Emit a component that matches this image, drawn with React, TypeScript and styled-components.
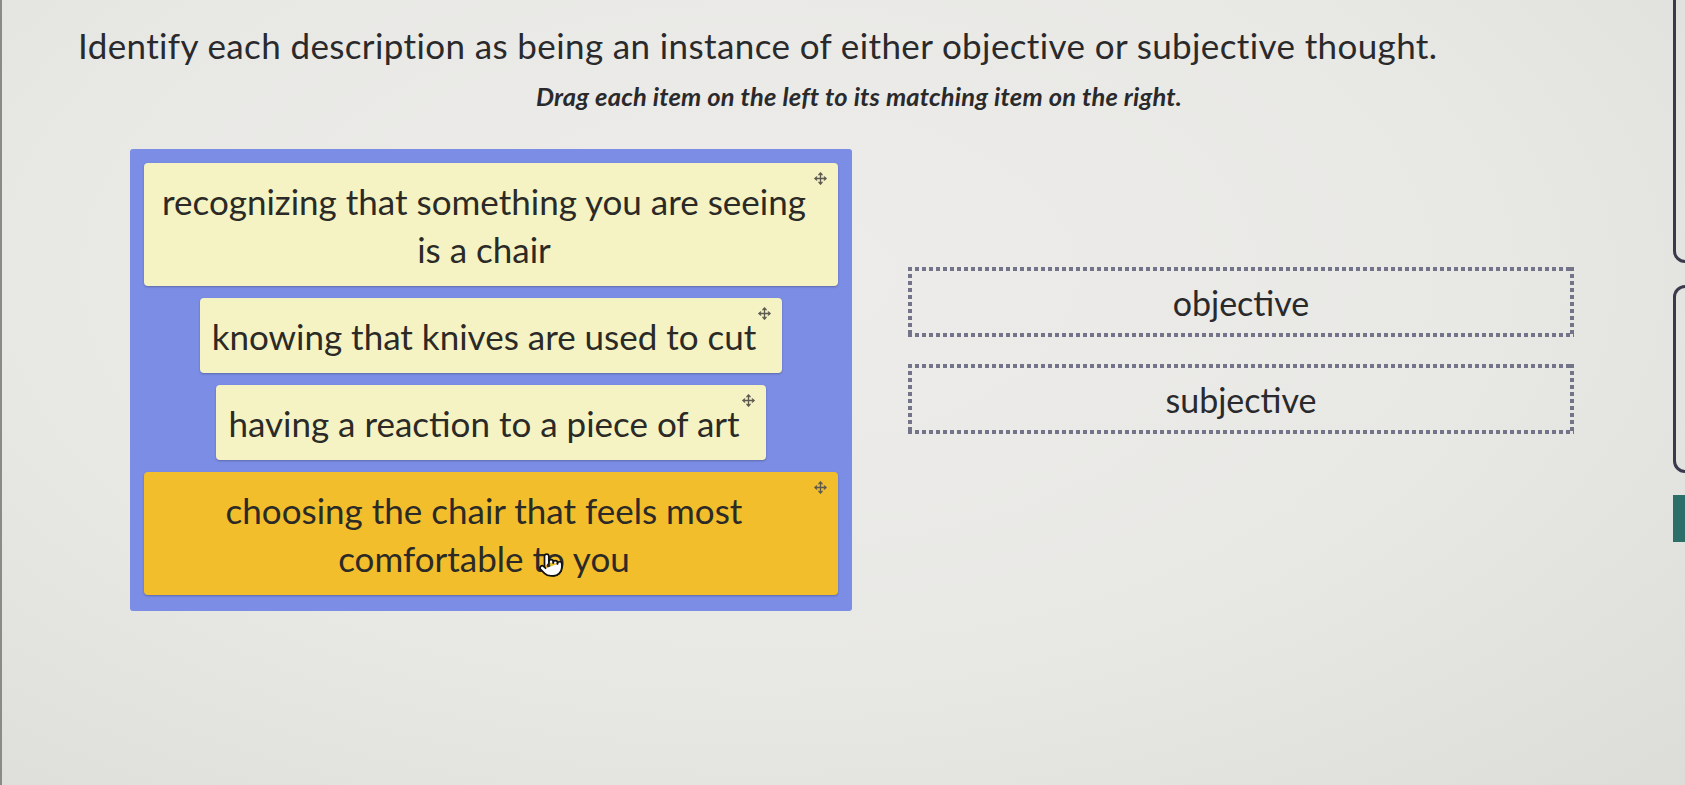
import React from "react";
import styled, { createGlobalStyle } from "styled-components";
import { Move, Pointer } from "lucide-react";

const Global = createGlobalStyle`
  html, body { margin: 0; padding: 0; }
  body {
    width: 1685px;
    height: 785px;
    overflow: hidden;
    font-family: Lato, "Open Sans", sans-serif;
    color: #2b2b2e;
    background: radial-gradient(ellipse at 45% 35%, #edecea 0%, #e8e8e5 55%, #dcdcd8 100%);
  }
`;

const Page = styled.div`
  display: flex;
  width: 1685px;
  height: 785px;
  border-left: 2px solid #8a8a88;
  box-sizing: border-box;
`;

const Main = styled.main`
  flex: 1;
  padding: 23px 0 0 76px;
`;

const Title = styled.h1`
  margin: 0;
  font-size: 35px;
  font-weight: 400;
  letter-spacing: 0.38px;
  line-height: 44px;
  color: #2a2a2c;
`;

const Subtitle = styled.p`
  margin: 14px 0 0 0;
  padding-left: 458px;
  font-size: 25.5px;
  font-weight: 700;
  font-style: italic;
  letter-spacing: 0.2px;
  line-height: 30px;
  color: #2a2a2c;
`;

const Board = styled.div`
  display: flex;
  align-items: flex-start;
  gap: 56px;
  margin: 38px 0 0 52px;
`;

const Panel = styled.div`
  width: 722px;
  box-sizing: border-box;
  padding: 14px 14px 16px;
  background: #7b8de5;
  border-radius: 3px;
  display: flex;
  flex-direction: column;
  align-items: center;
  gap: 12px;
`;

const Item = styled.div<{ $selected?: boolean }>`
  position: relative;
  box-sizing: border-box;
  max-width: 100%;
  padding: 14px 26px 13px 12px;
  background: ${(p) => (p.$selected ? "#f2be2c" : "#f5f3c3")};
  border-radius: 4px;
  box-shadow: 0 1px 2px rgba(40, 40, 60, 0.35);
  font-size: 35px;
  line-height: 48px;
  text-align: center;
  color: #2b2a26;
  width: ${(p) => (p.$selected ? "100%" : "auto")};
`;

const Grip = styled.span`
  position: absolute;
  top: 9px;
  right: 11px;
  display: flex;
  color: #5d5a50;
`;

const Cursor = styled.span`
  position: absolute;
  left: 394px;
  top: 80px;
  display: flex;
  color: #111;
`;

const Targets = styled.div`
  display: flex;
  flex-direction: column;
  gap: 27px;
  margin-top: 118px;
`;

const dots = "#73738a";
const Target = styled.div`
  width: 666px;
  height: 70px;
  box-sizing: border-box;
  display: flex;
  align-items: center;
  justify-content: center;
  font-size: 34px;
  color: #2a2a2c;
  background:
    repeating-linear-gradient(90deg, ${dots} 0 4px, transparent 4px 7px) top / 100% 4px no-repeat,
    repeating-linear-gradient(90deg, ${dots} 0 4px, transparent 4px 7px) bottom / 100% 4px no-repeat,
    repeating-linear-gradient(180deg, ${dots} 0 4px, transparent 4px 7px) left / 4px 100% no-repeat,
    repeating-linear-gradient(180deg, ${dots} 0 4px, transparent 4px 7px) right / 4px 100% no-repeat;
`;

const Side = styled.aside`
  width: 12px;
  display: flex;
  flex-direction: column;
  gap: 22px;
  margin-top: -12px;
`;

const SideButton = styled.div<{ $h: number }>`
  height: ${(p) => p.$h}px;
  width: 30px;
  flex: none;
  box-sizing: border-box;
  border: 3px solid #3a3a4c;
  border-radius: 12px;
`;

const SideBar = styled.div`
  height: 47px;
  width: 14px;
  flex: none;
  background: #2c6e6a;
`;

const items = [
  "recognizing that something you are seeing is a chair",
  "knowing that knives are used to cut",
  "having a reaction to a piece of art",
];

export default function App() {
  return (
    <>
      <Global />
      <Page>
        <Main>
          <Title>Identify each description as being an instance of either objective or subjective thought.</Title>
          <Subtitle>Drag each item on the left to its matching item on the right.</Subtitle>
          <Board>
            <Panel>
              {items.map((t) => (
                <Item key={t}>
                  {t}
                  <Grip>
                    <Move size={13} strokeWidth={2.5} />
                  </Grip>
                </Item>
              ))}
              <Item $selected>
                choosing the chair that feels most comfortable to you
                <Grip>
                  <Move size={13} strokeWidth={2.5} />
                </Grip>
                <Cursor>
                  <Pointer size={26} strokeWidth={1.6} fill="#fff" />
                </Cursor>
              </Item>
            </Panel>
            <Targets>
              <Target>objective</Target>
              <Target>subjective</Target>
            </Targets>
          </Board>
        </Main>
        <Side>
          <SideButton $h={275} />
          <SideButton $h={188} />
          <SideBar />
        </Side>
      </Page>
    </>
  );
}
